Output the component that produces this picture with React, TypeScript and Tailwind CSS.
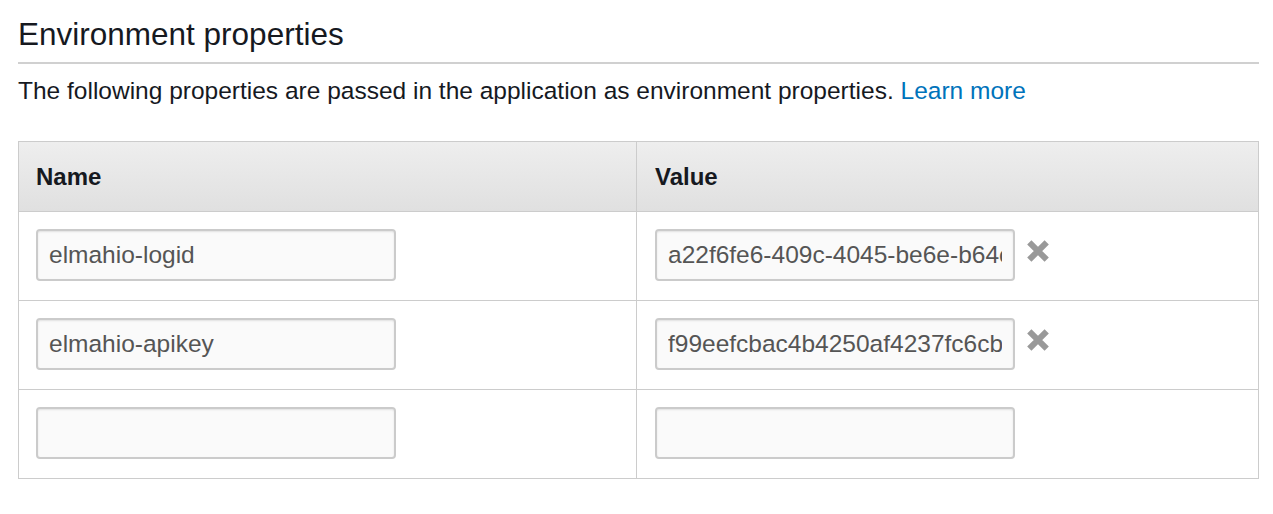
const rows = [
  { name: "elmahio-logid", value: "a22f6fe6-409c-4045-be6e-b64c2f1d8a93" },
  { name: "elmahio-apikey", value: "f99eefcbac4b4250af4237fc6cb1e2d4" },
  { name: "", value: "" },
];

function Field({ value }: { value: string }) {
  return (
    <input
      readOnly
      value={value}
      className="w-[360px] h-[52px] rounded-[4px] border-2 border-[#cbcbcb] bg-[#fafafa] px-[11px] text-[24.5px] text-[#555] shadow-[inset_0_1px_2px_rgba(0,0,0,0.1)] outline-none"
    />
  );
}

function RemoveIcon() {
  return (
    <svg width="22" height="22" viewBox="0 0 22 22" className="block">
      <path d="M2.3 2.3 L19.7 19.7 M19.7 2.3 L2.3 19.7" stroke="#999999" strokeWidth="6" fill="none" />
    </svg>
  );
}

export default function App() {
  return (
    <div className="bg-white min-h-[514px] pl-[18px] pt-[17px] font-['Liberation_Sans',Arial,sans-serif] text-[#16191f]">
      <div className="w-[1241px]">
        <h2 className="text-[31.5px] leading-[35px] pb-[10px] border-b-2 border-[#d0d0d0]">
          Environment properties
        </h2>
        <p className="mt-[10px] text-[24.5px] leading-[34px]">
          The following properties are passed in the application as environment properties.{" "}
          <a href="#" className="text-[#0073bb]">Learn more</a>
        </p>

        <div className="mt-[33px] border border-[#cccccc]">
          <div className="grid grid-cols-[618px_1fr] h-[70px] bg-gradient-to-b from-[#eeeeee] to-[#e0e0e0] border-b border-[#cccccc] text-[24px] font-bold">
            <div className="flex items-center pl-[17px] border-r border-[#cccccc]">Name</div>
            <div className="flex items-center pl-[18px]">Value</div>
          </div>
          {rows.map((r, i) => (
            <div
              key={i}
              className={`grid grid-cols-[618px_1fr] ${i < rows.length - 1 ? "h-[89px] border-b border-[#cccccc]" : "h-[88px]"}`}
            >
              <div className="flex items-start pt-[17px] pl-[17px] border-r border-[#cccccc]">
                <Field value={r.name} />
              </div>
              <div className="flex items-start pt-[17px] pl-[18px] gap-[12px]">
                <Field value={r.value} />
                {r.name && (
                  <button className="mt-[11px]">
                    <RemoveIcon />
                  </button>
                )}
              </div>
            </div>
          ))}
        </div>
      </div>
    </div>
  );
}
